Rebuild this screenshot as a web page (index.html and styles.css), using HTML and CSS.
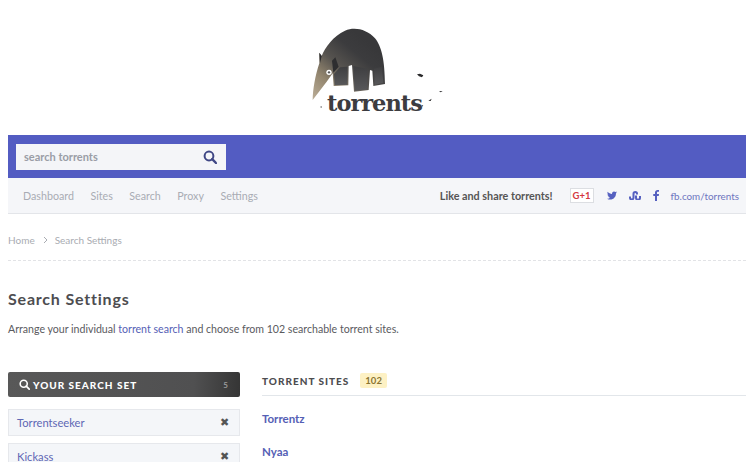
FILE: index.html
```html
<!DOCTYPE html>
<html lang="en">
<head>
<meta charset="utf-8">
<title>Search Settings</title>
<link rel="stylesheet" href="styles.css">
</head>
<body>
<header class="logo">
  <div class="logo-mark">
    <svg class="logo-art" width="170" height="120" viewBox="0 0 510 360">
      <defs>
        <linearGradient id="body" x1="0" y1="1" x2="0.72" y2="0.15">
          <stop offset="0" stop-color="#bcae98"/>
          <stop offset="0.3" stop-color="#93866f"/>
          <stop offset="0.55" stop-color="#56534f"/>
          <stop offset="0.8" stop-color="#3c3c3e"/>
          <stop offset="1" stop-color="#38383a"/>
        </linearGradient>
        <linearGradient id="leg" x1="0" y1="0" x2="0" y2="1">
          <stop offset="0" stop-color="#3e3e40"/>
          <stop offset="1" stop-color="#58585a"/>
        </linearGradient>
      </defs>
      <path fill="url(#body)" d="M68 270C68 240 76 195 88 160L88 128L95 138C105 112 130 78 165 62C195 50 230 58 255 85C275 110 284 150 285 222L250 228L247 182L240 180L236 240L192 245L186 165L176 168L175 226L131 228L128 190L110 215Z"/>
      <path fill="url(#leg)" d="M150 172L172 170L172 224L134 226L132 192Z"/>
      <path fill="url(#leg)" d="M190 168L232 176L232 238L194 243Z"/>
      <path fill="url(#leg)" d="M252 176L276 170L280 218L254 224Z"/>
      <path fill="#2e2e30" d="M126 152L136 142L146 170L130 188Z"/>
      <path fill="#2a2a2c" d="M88 128L95 138L90 160Z"/>
      <circle cx="117" cy="187" r="8" fill="#fff"/>
      <circle cx="117" cy="187" r="3.500" fill="#555"/>
      <path fill="#2a2a2c" d="M381 193l9-2l10 5l-4 6l-9-3zM447 243l11 1l-6 3zM415 272l10-6l-3 7zM90 291l5-2l0 4z"/>
      <path fill="#3b3b3b" d="M395 286l5 0l-3 4z"/>
    </svg>
    <span class="logo-text">torrents</span>
  </div>
</header>
<div class="search-bar">
  <form class="search-box">
    <span class="search-hint">search torrents</span>
    <svg class="search-icon" width="14" height="14" viewBox="0 0 14 14"><circle cx="6" cy="6" r="4.400" fill="none" stroke="#3f4785" stroke-width="2"/><path d="M9.200 9.200L13 13" stroke="#3f4785" stroke-width="2.400" stroke-linecap="round"/></svg>
  </form>
</div>
<nav class="nav">
  <div class="nav-links">
    <a>Dashboard</a><a>Sites</a><a>Search</a><a>Proxy</a><a>Settings</a>
  </div>
  <div class="share">
    <strong class="share-text">Like and share torrents!</strong>
    <span class="gplus">G+1</span>
    <svg class="share-icon" width="10" height="9" viewBox="0 0 24 20"><path fill="#5560c0" d="M24 2.400c-.9.4-1.800.7-2.800.8 1-.6 1.800-1.600 2.200-2.700-1 .6-2 1-3.100 1.200A5 5 0 0 0 12 6.300C7.900 6.100 4.300 4.100 1.700.9c-1.300 2.300-.6 5.200 1.500 6.600-.8 0-1.600-.2-2.200-.6 0 2.400 1.700 4.500 4 5-.7.2-1.500.2-2.200.1.600 2 2.500 3.400 4.600 3.500A10 10 0 0 1 0 17.500 14 14 0 0 0 7.500 19.700c9.100 0 14.300-7.700 14-14.600 1-.7 1.800-1.600 2.500-2.700z"/></svg>
    <svg class="share-icon" width="12" height="9" viewBox="0 0 24 18"><path fill="none" stroke="#5560c0" stroke-width="4" d="M2 11v2.500a3.500 3.500 0 0 0 7 0V5.500a3.500 3.500 0 0 1 7 0V7M14 9v4.500a3.500 3.500 0 0 0 8 0V10"/></svg>
    <svg class="share-icon" width="6" height="11" viewBox="0 0 12 22"><path fill="#5560c0" d="M8 22V12h3.500l.5-4H8V5.500C8 4.300 8.400 3.600 10 3.600h2V.2C11.600.1 10.500 0 9.200 0 6.300 0 4 1.900 4 5.100V8H.5v4H4v10z"/></svg>
    <a class="share-link">fb.com/torrents</a>
  </div>
</nav>
<div class="crumbs">
  <a>Home</a>
  <svg class="crumb-sep" width="5" height="8" viewBox="0 0 5 8"><path d="M1 1l3 3l-3 3" fill="none" stroke="#a9acb2" stroke-width="1"/></svg>
  <a>Search Settings</a>
</div>
<main>
  <h1 class="title">Search Settings</h1>
  <p class="intro">Arrange your individual <a>torrent search</a> and choose from 102 searchable torrent sites.</p>
  <div class="columns">
    <aside class="set">
      <div class="set-head">
        <svg width="11" height="11" viewBox="0 0 14 14"><circle cx="6" cy="6" r="4.500" fill="none" stroke="#fff" stroke-width="2"/><path d="M9.200 9.200L13 13" stroke="#fff" stroke-width="2.200" stroke-linecap="round"/></svg>
        <span class="set-title">YOUR SEARCH SET</span>
        <span class="set-count">5</span>
      </div>
      <div class="set-item"><a>Torrentseeker</a><span class="remove">&#10006;</span></div>
      <div class="set-item"><a>Kickass</a><span class="remove">&#10006;</span></div>
    </aside>
    <section class="sites">
      <div class="sites-head">
        <span class="sites-title">TORRENT SITES</span>
        <span class="badge">102</span>
      </div>
      <a class="site">Torrentz</a>
      <a class="site">Nyaa</a>
    </section>
  </div>
</main>
</body>
</html>
```
FILE: styles.css
```css
* { box-sizing: border-box; }
html, body { height: 462px; overflow: hidden; }
body {
  margin: 0;
  padding: 0 10px 0 8px;
  background: #fff;
  font-family: Lato, "Open Sans", sans-serif;
  font-size: 11px;
  color: #555;
}
a { color: #5560b5; text-decoration: none; }
.logo { height: 135px; display: flex; justify-content: center; }
.logo-mark { position: relative; width: 170px; height: 135px; margin-right: 4px; }
.logo-art { position: absolute; left: 0; top: 10px; }
.logo-text {
  position: absolute;
  left: 37px;
  top: 88px;
  font-family: "DejaVu Serif", serif;
  font-weight: 700;
  font-size: 22.500px;
  line-height: 30px;
  letter-spacing: -1px;
  color: #3c3c40;
}
.search-bar { height: 43px; background: #535cc2; padding: 9px 8px; }
.search-box {
  width: 210px;
  height: 26px;
  background: #f4f5f8;
  display: flex;
  align-items: center;
  justify-content: space-between;
  padding: 0 9px 0 8px;
}
.search-hint { color: #9a9da6; font-weight: 700; font-size: 11px; padding-bottom: 1px; }
.nav {
  height: 36px;
  background: #f5f6f9;
  border-bottom: 1px solid #e3e5e9;
  display: flex;
  align-items: center;
  justify-content: space-between;
  padding: 0 7px 0 15px;
}
.nav-links { display: flex; gap: 16.500px; }
.nav-links a { color: #a9acb4; font-size: 10.700px; }
.share { display: flex; align-items: center; }
.share-text { color: #555; font-weight: 700; font-size: 10.800px; margin-right: 17px; }
.gplus {
  width: 24px;
  height: 15px;
  border: 1px solid #dcdee2;
  background: #fff;
  color: #d4383e;
  font-weight: 700;
  font-size: 9.500px;
  line-height: 13px;
  text-align: center;
  margin-right: 13px;
}
.share-icon { margin-right: 12px; }
.share-link { color: #6d75c0; font-size: 9.850px; }
.crumbs {
  height: 47px;
  padding-top: 5px;
  border-bottom: 1px dashed #e2e3e6;
  display: flex;
  align-items: center;
  gap: 8px;
}
.crumbs a { color: #a9acb2; font-size: 10px; }
.crumb-sep { flex: none; margin-right: -1px; }
.title {
  margin: 0;
  padding-top: 26px;
  font-size: 16px;
  line-height: 24px;
  font-weight: 700;
  letter-spacing: 0.8px;
  color: #4d4d50;
}
.intro { margin: 10px 0 0; line-height: 16px; font-size: 10.600px; color: #5a5a5e; }
.columns { display: flex; gap: 22px; margin-top: 35px; }
.set { width: 232px; flex: none; }
.set-head {
  height: 25px;
  border-radius: 2px;
  background: linear-gradient(92deg, #585858 0%, #505051 80%, #353535 100%);
  display: flex;
  align-items: center;
  padding: 0 10px 0 11px;
  gap: 3px;
}
.set-title { color: #fff; font-weight: 900; font-size: 10px; letter-spacing: 1px; flex: 1; }
.set-count { color: #9b9b9b; font-size: 8px; font-weight: 700; margin-right: 2px; }
.set-item {
  height: 27px;
  background: #f4f6f9;
  border: 1px solid #e6e8ec;
  display: flex;
  align-items: center;
  justify-content: space-between;
  padding: 0 10px 1px 8px;
  margin-top: 12px;
}
.set-item + .set-item { margin-top: 7px; }
.set-item a { font-size: 11.200px; color: #5f68b5; }
.remove { color: #555; font-size: 11px; }
.sites { flex: 1; }
.sites-head {
  height: 24px;
  border-bottom: 1px solid #e2e6ea;
  display: flex;
  align-items: flex-start;
  gap: 11px;
}
.sites-title { font-weight: 900; font-size: 10px; letter-spacing: 1px; line-height: 18px; color: #4d4d50; }
.badge {
  background: #fdf1c4;
  color: #8a7430;
  font-size: 9.500px;
  font-weight: 700;
  line-height: 15px;
  height: 15px;
  padding: 0 5px;
  border-radius: 2px;
  margin-top: 1px;
}
.site { display: block; font-weight: 700; font-size: 11.500px; line-height: 16px; color: #5560b5; margin-top: 15px; }
.site + .site { margin-top: 17px; }
```
